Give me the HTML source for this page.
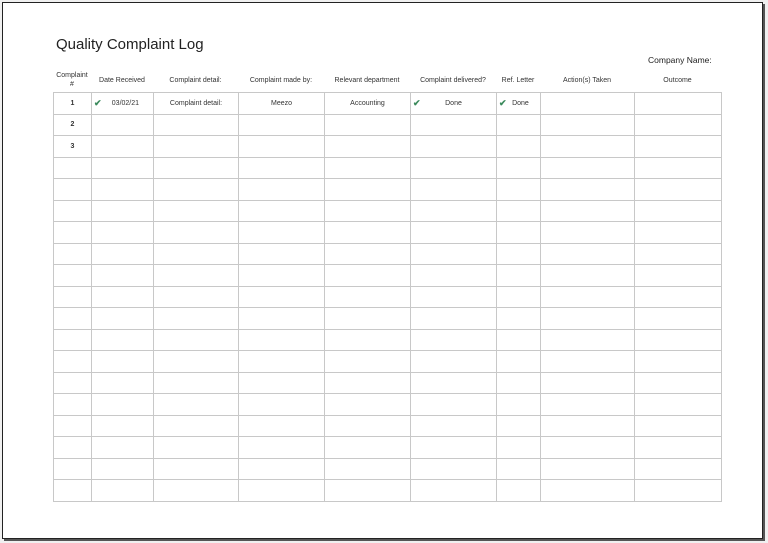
<!DOCTYPE html>
<html><head><style>
body{margin:0;width:768px;height:543px;background:#f0f0f0;position:relative;overflow:hidden;font-family:"Liberation Sans",sans-serif;}
.page{position:absolute;left:2px;top:2px;width:759px;height:535px;background:#fff;border:1px solid #222;box-shadow:2px 2px 0 #555;}
.t{position:absolute;color:#333;font-size:7px;text-align:center;white-space:nowrap}
table{position:absolute;left:53px;top:92px;border-collapse:collapse;}
td{border:1px solid #c8c8c8;height:20.5px;padding:0;font-size:7px;color:#333;text-align:center;position:relative}
.ck{position:absolute;left:2px;top:5px;color:#3b8a5c;font-size:9px;font-weight:bold}
</style></head><body>
<div class="page"></div>
<div style="position:absolute;left:56px;top:36px;font-size:15px;color:#222">Quality Complaint Log</div>
<div style="position:absolute;left:648px;top:55px;font-size:8.5px;color:#222">Company Name:</div>
<div class="t" style="left:53px;width:38px;top:71px;line-height:9px">Complaint<br>#</div>
<div class="t" style="left:91px;width:62px;top:77px">Date Received</div>
<div class="t" style="left:153px;width:85px;top:77px">Complaint detail:</div>
<div class="t" style="left:238px;width:86px;top:77px">Complaint made by:</div>
<div class="t" style="left:324px;width:86px;top:77px">Relevant department</div>
<div class="t" style="left:410px;width:86px;top:77px">Complaint delivered?</div>
<div class="t" style="left:496px;width:44px;top:77px">Ref. Letter</div>
<div class="t" style="left:540px;width:94px;top:77px">Action(s) Taken</div>
<div class="t" style="left:634px;width:87px;top:77px">Outcome</div>
<table>
<colgroup><col style="width:38px"><col style="width:62px"><col style="width:85px"><col style="width:86px"><col style="width:86px"><col style="width:86px"><col style="width:44px"><col style="width:94px"><col style="width:87px"></colgroup>
<tr><td><b>1</b></td><td><span class="ck">✔</span>&nbsp;&nbsp;&nbsp;03/02/21</td><td>Complaint detail:</td><td>Meezo</td><td>Accounting</td><td><span class="ck">✔</span>Done</td><td><span class="ck">✔</span>&nbsp;&nbsp;Done</td><td></td><td></td></tr>
<tr><td><b>2</b></td><td></td><td></td><td></td><td></td><td></td><td></td><td></td><td></td></tr>
<tr><td><b>3</b></td><td></td><td></td><td></td><td></td><td></td><td></td><td></td><td></td></tr>
<tr><td></td><td></td><td></td><td></td><td></td><td></td><td></td><td></td><td></td></tr>
<tr><td></td><td></td><td></td><td></td><td></td><td></td><td></td><td></td><td></td></tr>
<tr><td></td><td></td><td></td><td></td><td></td><td></td><td></td><td></td><td></td></tr>
<tr><td></td><td></td><td></td><td></td><td></td><td></td><td></td><td></td><td></td></tr>
<tr><td></td><td></td><td></td><td></td><td></td><td></td><td></td><td></td><td></td></tr>
<tr><td></td><td></td><td></td><td></td><td></td><td></td><td></td><td></td><td></td></tr>
<tr><td></td><td></td><td></td><td></td><td></td><td></td><td></td><td></td><td></td></tr>
<tr><td></td><td></td><td></td><td></td><td></td><td></td><td></td><td></td><td></td></tr>
<tr><td></td><td></td><td></td><td></td><td></td><td></td><td></td><td></td><td></td></tr>
<tr><td></td><td></td><td></td><td></td><td></td><td></td><td></td><td></td><td></td></tr>
<tr><td></td><td></td><td></td><td></td><td></td><td></td><td></td><td></td><td></td></tr>
<tr><td></td><td></td><td></td><td></td><td></td><td></td><td></td><td></td><td></td></tr>
<tr><td></td><td></td><td></td><td></td><td></td><td></td><td></td><td></td><td></td></tr>
<tr><td></td><td></td><td></td><td></td><td></td><td></td><td></td><td></td><td></td></tr>
<tr><td></td><td></td><td></td><td></td><td></td><td></td><td></td><td></td><td></td></tr>
<tr><td></td><td></td><td></td><td></td><td></td><td></td><td></td><td></td><td></td></tr>
</table>
</body></html>
